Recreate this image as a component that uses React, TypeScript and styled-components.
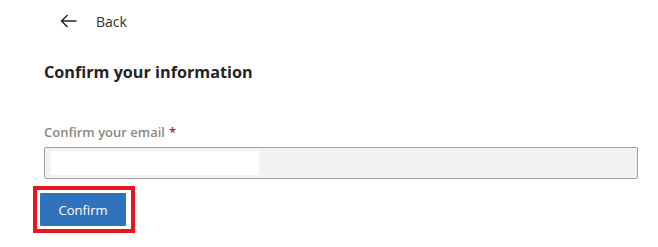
import React from "react";
import styled, { createGlobalStyle } from "styled-components";

const Global = createGlobalStyle`
  html, body { margin: 0; padding: 0; background: #ffffff; }
  body { font-family: "Open Sans", "Noto Sans", sans-serif; color: #252423; }
`;

const Page = styled.div`
  width: 658px;
  height: 247px;
  padding: 0 20px 0 44px;
  box-sizing: border-box;
  display: flex;
  flex-direction: column;
`;

const BackRow = styled.button`
  display: flex;
  align-items: center;
  gap: 19px;
  margin: 10px 0 0 16px;
  padding: 0;
  border: none;
  background: none;
  font-family: inherit;
  font-size: 14px;
  color: #323130;
  height: 22px;
  cursor: pointer;
`;

const Heading = styled.h1`
  margin: 28px 0 0;
  font-size: 16.2px;
  font-weight: 700;
  line-height: 24px;
  color: #252423;
`;

const Label = styled.label`
  margin-top: 39px;
  font-size: 13px;
  font-weight: 600;
  line-height: 18px;
  color: #8a8886;
`;

const Required = styled.span`
  color: #a4262c;
  margin-left: 4px;
`;

const Input = styled.div`
  margin-top: 6px;
  height: 32px;
  box-sizing: border-box;
  border: 1px solid #a19f9d;
  border-radius: 2px;
  background: #f3f2f1;
  padding: 3px 6px;
  display: flex;
`;

const Redaction = styled.div`
  width: 208px;
  height: 100%;
  background: #ffffff;
`;

const Highlight = styled.div`
  margin: 7px 0 0 -11px;
  align-self: flex-start;
  border: 4px solid #e8141f;
  padding: 3px 5px 3px 3px;
`;

const PrimaryButton = styled.button`
  width: 86px;
  height: 33px;
  border: none;
  border-radius: 1px;
  background: #2f73bd;
  color: #ffffff;
  font-family: inherit;
  font-size: 13px;
  display: block;
  cursor: pointer;
`;

export default function App() {
  return (
    <>
      <Global />
      <Page>
        <BackRow>
          <svg width="17" height="14" viewBox="0 0 17 14" fill="none" stroke="#252423" strokeWidth="1.4">
            <path d="M16.5 7H1.5M7.5 1L1.5 7l6 6" />
          </svg>
          Back
        </BackRow>
        <Heading>Confirm your information</Heading>
        <Label>
          Confirm your email<Required>*</Required>
        </Label>
        <Input>
          <Redaction />
        </Input>
        <Highlight>
          <PrimaryButton>Confirm</PrimaryButton>
        </Highlight>
      </Page>
    </>
  );
}
